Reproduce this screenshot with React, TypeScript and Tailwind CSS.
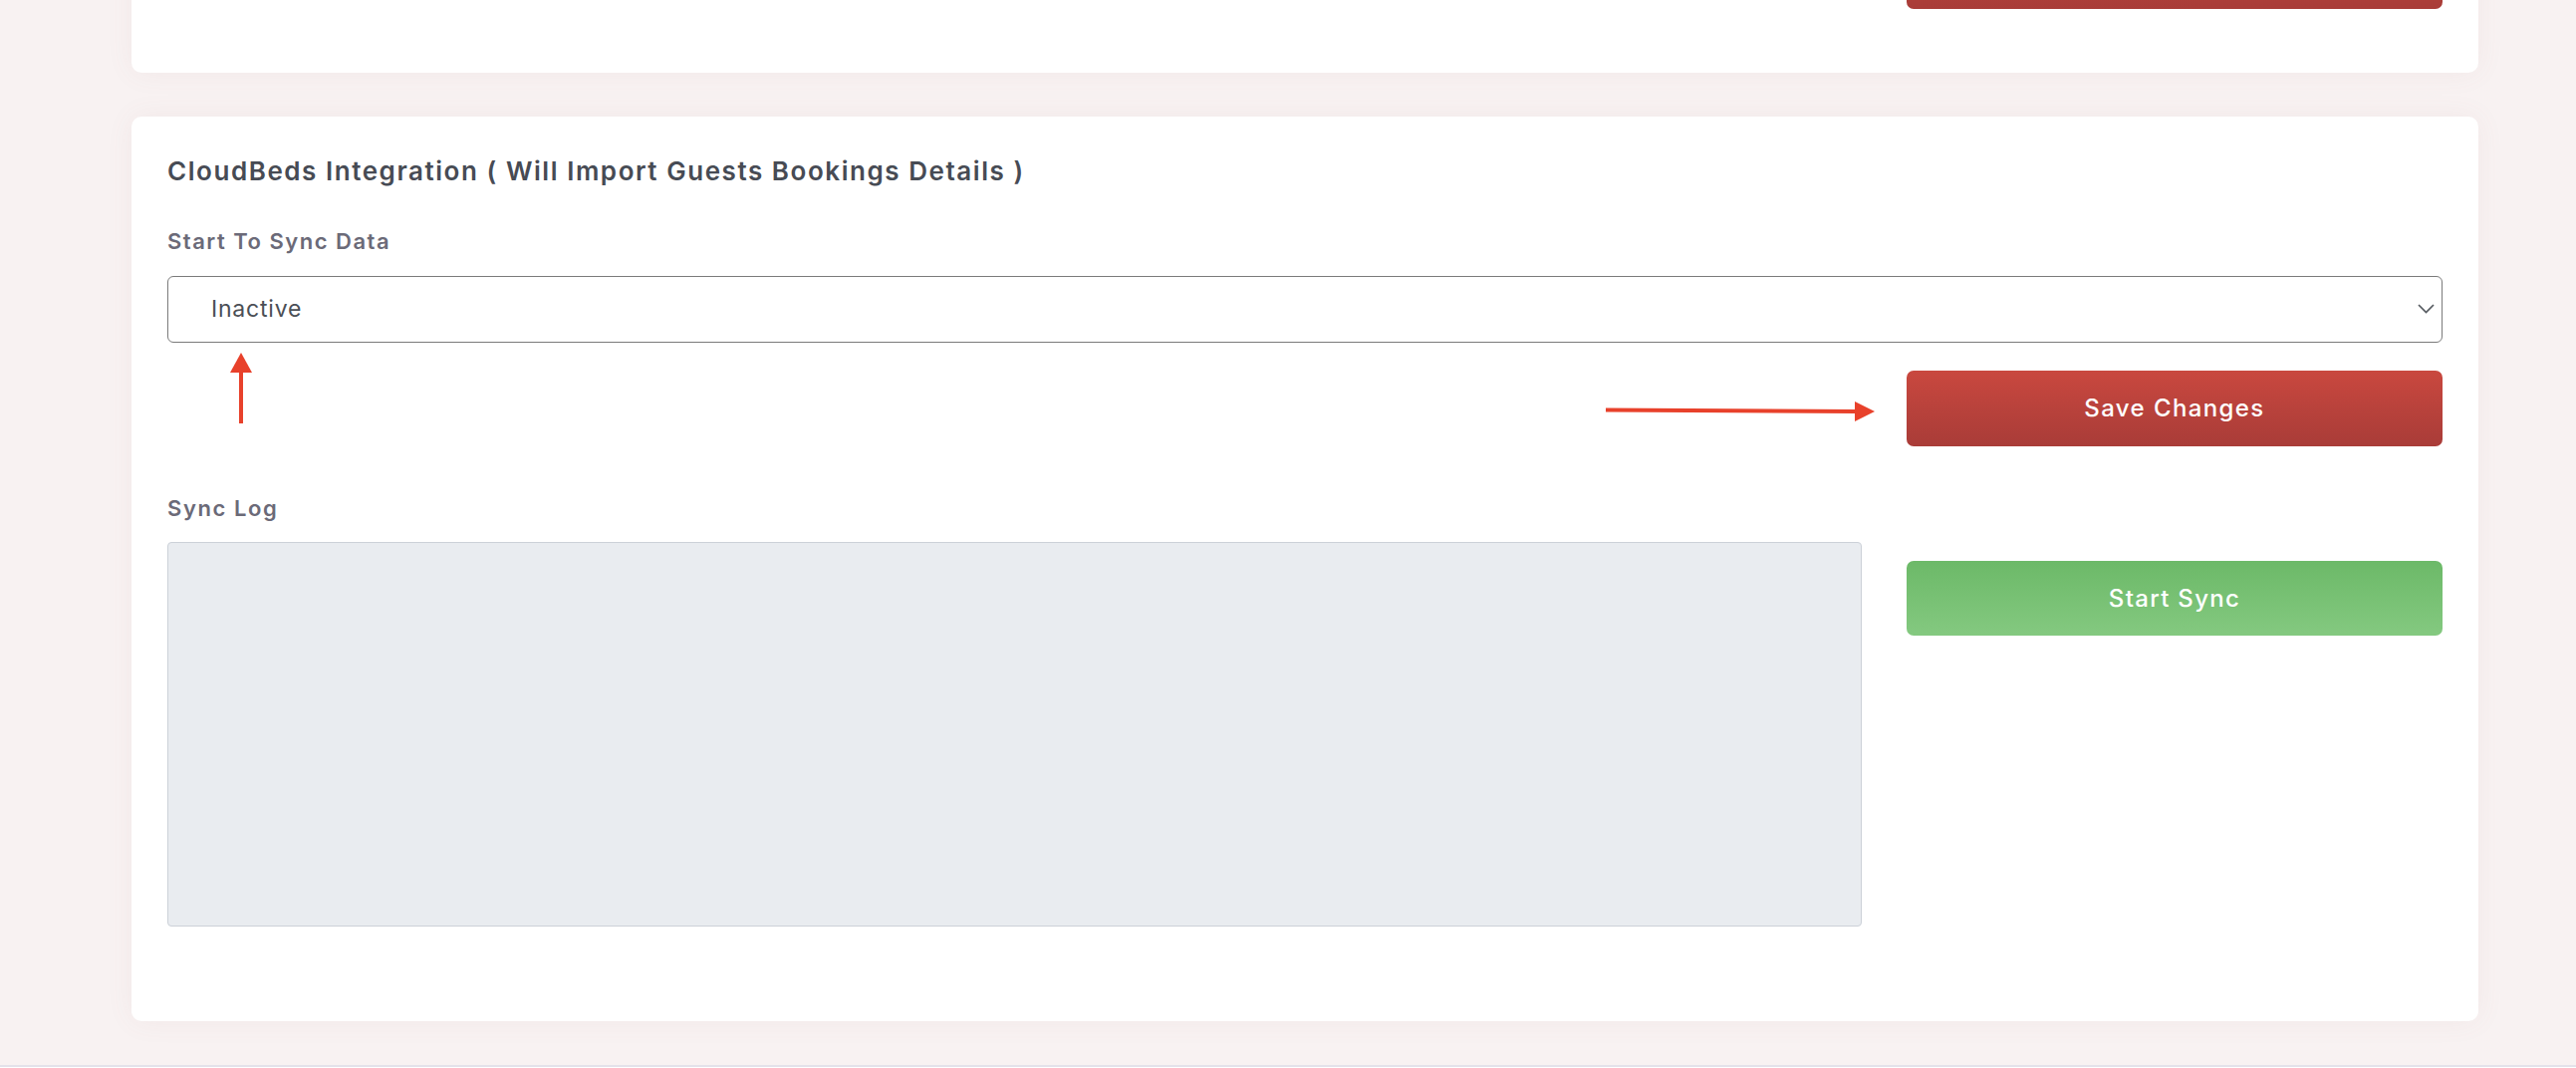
const font = "font-['Inter','Open_Sans',sans-serif]";

function Annotations() {
  return (
    <svg
      className="pointer-events-none absolute left-0 top-0"
      width="2586"
      height="1072"
      viewBox="0 0 2586 1072"
    >
      <rect x="240" y="372" width="4" height="53" fill="#e8412b" />
      <polygon points="231,374 253,374 242,354" fill="#e8412b" />
      <polygon points="1612,409.5 1864,411 1864,415 1612,413.5" fill="#e8412b" />
      <polygon points="1862,403 1862,423 1882,413" fill="#e8412b" />
    </svg>
  );
}

export default function App() {
  return (
    <div className={`relative h-[1072px] overflow-hidden bg-[#f8f2f2] ${font}`}>
      <div className="pl-[132px] pr-[98px]">
        {/* previous card, only its bottom is on screen */}
        <div className="-mt-[67px] h-[140px] rounded-[10px] bg-white px-[36px] shadow-[0_0_28px_rgba(150,100,100,0.07)]">
          <div className="flex justify-end">
            <div className="h-[76px] w-[538px] rounded-[7px] bg-linear-to-b from-[#c8483f] to-[#a83c38]" />
          </div>
        </div>

        <div className="mt-[44px] rounded-[10px] bg-white px-[36px] pb-[95px] pt-[39px] shadow-[0_0_28px_rgba(150,100,100,0.07)]">
          <h2 className="text-[26px] font-semibold leading-[32px] tracking-[1.55px] text-[#474b54]">
            CloudBeds Integration ( Will Import Guests Bookings Details )
          </h2>

          <label className="mt-[40px] block text-[22px] font-semibold leading-[28px] tracking-[1.5px] text-[#6b6a78]">
            Start To Sync Data
          </label>
          <div className="relative mt-[21px]">
            <select
              defaultValue="inactive"
              className="h-[67px] w-full appearance-none rounded-[6px] border border-[#7b7b7b] bg-white pl-[43px] text-[23px] tracking-[0.8px] text-[#4b4f56] outline-none"
            >
              <option value="inactive">Inactive</option>
              <option value="active">Active</option>
            </select>
            <svg
              width="17"
              height="10"
              viewBox="0 0 17 10"
              className="pointer-events-none absolute right-[8px] top-[28px]"
            >
              <polyline
                points="1,1 8.5,8.5 16,1"
                fill="none"
                stroke="#555a60"
                strokeWidth="1.7"
              />
            </svg>
          </div>

          <div className="mt-[28px] flex justify-end">
            <button className="h-[76px] w-[538px] rounded-[7px] bg-linear-to-b from-[#c9483f] to-[#a93c38] text-[24px] font-medium tracking-[1.4px] text-white">
              Save Changes
            </button>
          </div>

          <div className="mt-[48px] grid grid-cols-[1fr_538px] gap-x-[45px]">
            <div>
              <label className="block text-[22px] font-semibold leading-[28px] tracking-[1.6px] text-[#6b6a78]">
                Sync Log
              </label>
              <textarea
                readOnly
                className="mt-[20px] block h-[386px] w-full resize-none rounded-[4px] border border-[#ccd1d8] bg-[#e9ecf0] outline-none"
              />
            </div>
            <div className="pt-[67px]">
              <button className="h-[75px] w-full rounded-[7px] bg-linear-to-b from-[#6cb968] to-[#84c980] text-[24px] font-medium tracking-[1.3px] text-white">
                Start Sync
              </button>
            </div>
          </div>
        </div>
      </div>

      <div className="mt-[44px] h-[3px] border-t-2 border-[#e4e2ea] bg-white" />

      <Annotations />
    </div>
  );
}
